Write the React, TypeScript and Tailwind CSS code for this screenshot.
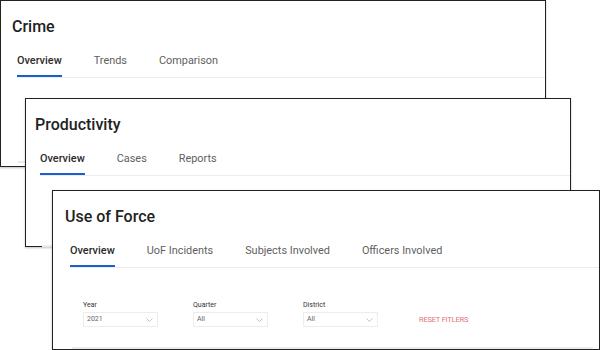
import React from 'react'

interface Card {
  title: string
  tabs: string[]
  box: string
  pad: string
  panel: string
  filters?: boolean
}

const CARDS: Card[] = [
  {
    title: 'Crime',
    tabs: ['Overview', 'Trends', 'Comparison'],
    box: 'left-0 top-0 w-[546px] h-[167px]',
    pad: 'pl-[11px]',
    panel: 'mt-[83px] ml-[6px] mr-[8px]',
  },
  {
    title: 'Productivity',
    tabs: ['Overview', 'Cases', 'Reports'],
    box: 'left-[25px] top-[98px] w-[546px] h-[149px]',
    pad: 'pl-[9px]',
    panel: 'mt-[69px] ml-[7px] mr-[8px]',
  },
  {
    title: 'Use of Force',
    tabs: ['Overview', 'UoF Incidents', 'Subjects Involved', 'Officers Involved'],
    box: 'left-[52px] top-[190px] w-[548px] h-[160px]',
    pad: 'pl-[12px]',
    panel: 'mt-[20px] ml-[7px] mr-[6px]',
    filters: true,
  },
]

const FILTERS = [
  { label: 'Year', value: '2021' },
  { label: 'Quarter', value: 'All' },
  { label: 'District', value: 'All' },
]

function Chevron() {
  return (
    <svg width="7" height="4" viewBox="0 0 7 4" className="text-[#b5b5b5]">
      <polyline points="0.5,0.5 3.5,3.5 6.5,0.5" fill="none" stroke="currentColor" strokeWidth="0.8" />
    </svg>
  )
}

function Filters() {
  return (
    <div className="flex items-end mt-[33px] ml-[18px]">
      {FILTERS.map((f, i) => (
        <div key={f.label} className={`flex flex-col ${i > 0 ? 'ml-[35px]' : ''}`}>
          <span className="text-[7px] leading-[9px] text-[#333]">{f.label}</span>
          <div className="mt-[2px] w-[75px] h-[15px] border border-[#ededed] flex items-center justify-between pl-[3px] pr-[4px]">
            <span className="text-[7px] text-[#666]">{f.value}</span>
            <Chevron />
          </div>
        </div>
      ))}
      <span className="ml-[41px] h-[15px] flex items-center text-[7.5px] tracking-[-0.2px] text-[#e3727a]">RESET FITLERS</span>
    </div>
  )
}

function Window({ card }: { card: Card }) {
  return (
    <div className={`absolute ${card.box} bg-white border border-[#222] shadow-[0_1px_2px_rgba(0,0,0,0.25)] flex flex-col pt-[16px] ${card.pad}`}>
      <h1 className="text-[16px] leading-[20px] font-medium text-[#222]">{card.title}</h1>
      <div className="flex gap-[32px] mt-[17px] ml-[5px] border-b border-[#ececec]">
        {card.tabs.map((t, i) => (
          <div
            key={t}
            className={`text-[10.9px] leading-[14px] pb-[7px] border-b-2 ${
              i === 0 ? 'text-[#2b2b2b] font-medium border-[#1a5fd0]' : 'text-[#5f5f5f] border-transparent'
            }`}
          >
            {t}
          </div>
        ))}
      </div>
      {card.filters && <Filters />}
      <div className={`${card.panel} border-t-2 border-[#ececec]`} />
    </div>
  )
}

export default function App() {
  return (
    <div className="relative w-[600px] h-[350px] bg-white overflow-hidden" style={{ fontFamily: 'Roboto, "Liberation Sans", sans-serif' }}>
      {CARDS.map(c => (
        <Window key={c.title} card={c} />
      ))}
    </div>
  )
}
